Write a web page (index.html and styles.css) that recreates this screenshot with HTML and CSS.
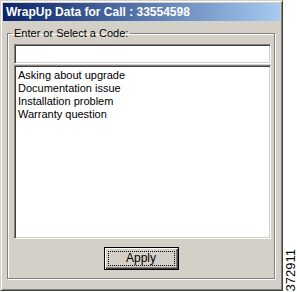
FILE: index.html
```html
<!DOCTYPE html>
<html lang="en">

<head>
  <meta charset="UTF-8" />
  <title>WrapUp Data</title>
  <link rel="stylesheet" href="styles.css">
</head>

<body>

  <div class="window">
    <div class="titlebar">WrapUp Data for Call : 33554598</div>

    <div class="client">
      <fieldset class="group">
        <legend>Enter or Select a Code:</legend>
        <input class="code-input" type="text">

        <div class="code-list">
          <div class="code-item">Asking about upgrade</div>
          <div class="code-item">Documentation issue</div>
          <div class="code-item">Installation problem</div>
          <div class="code-item">Warranty question</div>
        </div>

        <div class="actions">
          <button class="btn"><span class="btn-focus">Apply</span></button>
        </div>
      </fieldset>
    </div>
  </div>

  <div class="figure-id">372911</div>

</body>

</html>
```

FILE: styles.css
```css
body {
  margin: 0;
  background: #ffffff;
  font-family: 'Liberation Sans', Arial, sans-serif;
  font-size: 11px;
  color: #000000;
  display: flex;
  align-items: flex-start;
}

.window {
  box-sizing: border-box;
  width: 284px;
  height: 291px;
  padding: 2px;
  background: #d4d0c8;
  border: 1px solid;
  border-color: #d4d0c8 #404040 #404040 #d4d0c8;
  box-shadow: inset 1px 1px #ffffff, inset -1px -1px #808080;
  display: flex;
  flex-direction: column;
}

.titlebar {
  height: 18px;
  line-height: 19px;
  padding-left: 3px;
  background: linear-gradient(to right, #0a246a, #a6caf0);
  color: #ffffff;
  font-weight: bold;
  font-size: 12px;
  white-space: nowrap;
}

.client {
  flex: 1;
  display: flex;
  padding: 6px 5px 9px 4px;
}

.group {
  flex: 1;
  margin: 0;
  padding: 4px 3px 8px 6px;
  border: 1px solid #808080;
  box-shadow: inset 1px 1px #ffffff, 1px 1px #ffffff;
  display: flex;
  flex-direction: column;
  min-width: 0;
}

.group legend {
  padding: 0 2px;
  margin-left: -2px;
  line-height: 13px;
}

.code-input {
  box-sizing: border-box;
  height: 20px;
  margin: 0;
  padding: 0 2px;
  background: #ffffff;
  border: 1px solid;
  border-color: #808080 #ffffff #ffffff #808080;
  box-shadow: inset 1px 1px #404040, inset -1px -1px #d4d0c8;
  outline: none;
  font: inherit;
}

.code-list {
  flex: 1;
  margin-top: 1px;
  padding: 3px 3px;
  background: #ffffff;
  border: 1px solid;
  border-color: #808080 #ffffff #ffffff #808080;
  box-shadow: inset 1px 1px #404040, inset -1px -1px #d4d0c8;
}

.code-item {
  line-height: 13px;
  white-space: nowrap;
}

.actions {
  display: flex;
  justify-content: center;
  padding-top: 8px;
  margin-left: -3px;
}

.btn {
  box-sizing: border-box;
  width: 75px;
  height: 23px;
  padding: 3px;
  background: #d4d0c8;
  border: 1px solid #000000;
  box-shadow: inset 1px 1px #ffffff, inset -1px -1px #404040, inset -2px -2px #808080;
  font: inherit;
  font-size: 12px;
  display: flex;
}

.btn-focus {
  flex: 1;
  border: 1px dotted #000000;
  line-height: 13px;
}

.figure-id {
  align-self: flex-end;
  margin: 0 0 0 2px;
  writing-mode: vertical-rl;
  transform: rotate(180deg);
  font-size: 13px;
  line-height: 12px;
}
```
